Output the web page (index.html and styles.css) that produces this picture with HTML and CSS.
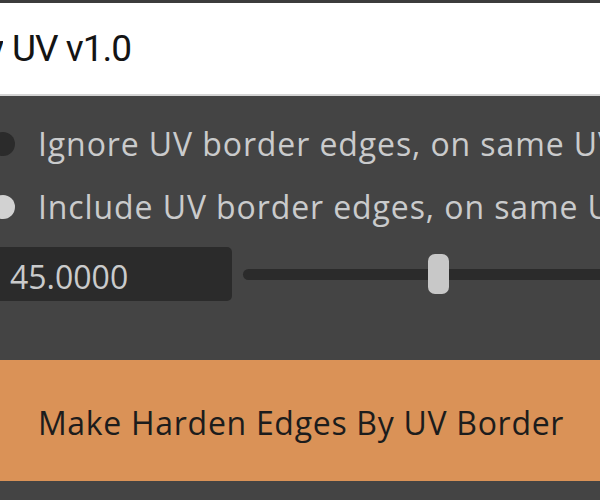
FILE: index.html
```html
<!DOCTYPE html>
<html lang="en">
<head>
  <meta charset="UTF-8" />
  <meta name="viewport" content="width=device-width, initial-scale=1" />
  <title>Harden Edges By UV v1.0</title>
  <link rel="stylesheet" href="styles.css">
</head>
<body>

  <div class="window">
    <!-- Title Bar -->
    <header class="titlebar">
      <span class="title-lead"><span>Harden Edges By</span></span>
      <span class="title-text">UV v1.0</span>
    </header>

    <!-- Options -->
    <main class="panel">
      <label class="radio-row">
        <input type="radio" name="mode" class="radio" />
        <span class="radio-dot"></span>
        <span class="radio-label">Ignore UV border edges, on same UV shell</span>
      </label>

      <label class="radio-row">
        <input type="radio" name="mode" class="radio" checked />
        <span class="radio-dot"></span>
        <span class="radio-label">Include UV border edges, on same UV shell</span>
      </label>

      <div class="angle-row">
        <input type="text" class="angle-field" value="45.0000" />
        <div class="slider">
          <div class="slider-track"></div>
          <div class="slider-handle"></div>
        </div>
      </div>

      <button class="make-btn">Make Harden Edges By UV Border</button>
    </main>
  </div>

</body>
</html>
```

FILE: styles.css
```css
/* Basic Reset */
* {
  box-sizing: border-box;
}

html,
body {
  margin: 0;
  height: 100%;
  overflow: hidden;
  background: #444444;
}

body {
  font-family: "Open Sans", "Noto Sans", sans-serif;
}

.window {
  width: 660px;
  margin-left: -24px;
}

/* Title Bar */
.titlebar {
  height: 96px;
  background: #ffffff;
  border-top: 3px solid #3c3c3c;
  border-bottom: 2px solid #d4d4d4;
  display: flex;
  align-items: center;
  padding-left: 24px;
  color: #141414;
  font-family: Roboto, "Open Sans", sans-serif;
  font-size: 37px;
  letter-spacing: -1px;
  white-space: nowrap;
}

.title-lead {
  flex: none;
  width: 3px;
  overflow: hidden;
  display: flex;
  justify-content: flex-end;
  margin-right: 9px;
}

/* Options Panel */
.panel {
  padding: 16px 25px 0 15px;
  display: flex;
  flex-direction: column;
}

.radio-row {
  height: 63px;
  display: flex;
  align-items: center;
  gap: 23px;
  color: #cacbcc;
  font-size: 32px;
  letter-spacing: 0.9px;
  white-space: nowrap;
}

.radio {
  display: none;
}

.radio-dot {
  flex: none;
  width: 24px;
  height: 24px;
  border-radius: 50%;
  background: #2b2b2b;
}

.radio:checked + .radio-dot {
  background: #d2d2d2;
}

/* Angle Field + Slider */
.angle-row {
  margin-top: 9px;
  height: 54px;
  display: flex;
  align-items: center;
  gap: 11px;
}

.angle-field {
  flex: none;
  width: 241px;
  height: 54px;
  border: none;
  border-radius: 5px;
  background: #2b2b2b;
  color: #cacbcc;
  font-family: inherit;
  font-size: 32px;
  padding: 5px 0 0 19px;
  outline: none;
}

.slider {
  flex: 1;
  position: relative;
  height: 40px;
  display: flex;
  align-items: center;
}

.slider-track {
  width: 100%;
  height: 11px;
  border-radius: 6px;
  background: #2b2b2b;
}

.slider-handle {
  position: absolute;
  left: 185px;
  top: 0;
  width: 21px;
  height: 40px;
  border-radius: 7px;
  background: #c8c8c8;
}

/* Main Button */
.make-btn {
  margin-top: 59px;
  height: 121px;
  border: none;
  background: #da9257;
  color: #1c1c1c;
  font-family: inherit;
  font-size: 32px;
  letter-spacing: 0.7px;
  padding-top: 4px;
  cursor: pointer;
}

.make-btn:hover {
  background: #e29d62;
}
```
